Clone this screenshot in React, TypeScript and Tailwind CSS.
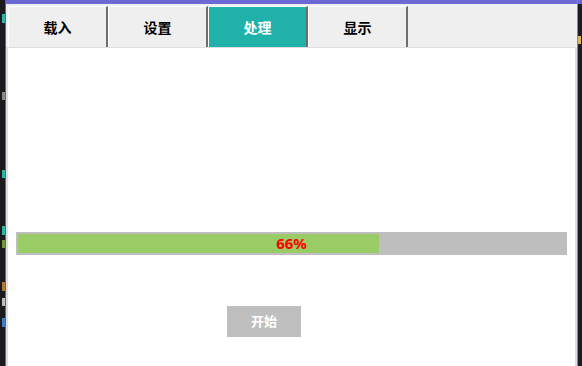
import React from 'react';

const TABS = ['载入', '设置', '处理', '显示'];
const ACTIVE = 2;
const PROGRESS = 66;

// slivers of the code editor peeking out on the left edge
const EDGE_BITS: { top: number; h: number; color: string }[] = [
  { top: 14, h: 9, color: '#2fb5a8' },
  { top: 92, h: 8, color: '#8a8a8a' },
  { top: 170, h: 8, color: '#2fb5a8' },
  { top: 226, h: 9, color: '#2fb5a8' },
  { top: 240, h: 8, color: '#6f9a34' },
  { top: 282, h: 9, color: '#b07a30' },
  { top: 298, h: 8, color: '#bdbdbd' },
  { top: 318, h: 9, color: '#3f7fc8' },
];

const App: React.FC = () => {
  return (
    <div
      className="w-[582px] h-[366px] flex bg-[#1b1b1f] overflow-hidden"
      style={{ fontFamily: '"Noto Sans", "Noto Sans CJK SC", sans-serif' }}
    >
      {/* left editor strip */}
      <div className="w-[5px] h-full flex flex-col items-end">
        {EDGE_BITS.map((b, i) => (
          <div
            key={i}
            className="w-[3px]"
            style={{
              marginTop: i === 0 ? b.top : b.top - EDGE_BITS[i - 1].top - EDGE_BITS[i - 1].h,
              height: b.h,
              backgroundColor: b.color,
            }}
          />
        ))}
      </div>
      <div className="w-[1px] h-full bg-[#5b5bc8]" />

      {/* window */}
      <div className="w-[571px] h-full flex flex-col">
        <div className="h-[4px] bg-[#6c68d4]" />
        <div className="h-[43px] bg-[#efefef] flex pl-[2px] pt-[2px]">
          {TABS.map((t, i) => (
            <div
              key={t}
              className={
                'w-[100px] h-[41px] flex items-center justify-center text-[14px] font-bold border-t border-l border-r-2 border-t-white border-l-white border-r-[#6e6e6e] ' +
                (i === ACTIVE ? 'bg-[#20b2aa] text-white' : 'bg-[#efefef] text-black')
              }
            >
              {t}
            </div>
          ))}
        </div>
        <div className="flex-1 flex flex-col bg-white border-t border-l-2 border-r-2 border-[#dedede]">
          <div className="h-[184px]" />
          <div className="mx-[8px] h-[23px] border-2 border-[#bebebe] bg-[#bebebe] flex relative">
            <div className="h-full bg-[#99cc66]" style={{ width: `${PROGRESS}%` }} />
            <div className="absolute inset-0 flex items-center justify-center text-[15px] font-bold text-[#ff0000]">
              {PROGRESS}%
            </div>
          </div>
          <div className="flex mt-[51px] pl-[219px]">
            <div className="w-[74px] h-[31px] bg-[#bfbfbf] flex items-center justify-center text-[13px] font-bold text-white">
              开始
            </div>
          </div>
        </div>
      </div>

      {/* right editor strip */}
      <div className="w-[1px] h-full bg-[#8a8a8a]" />
      <div className="flex-1 h-full bg-[#1c1c24] flex flex-col">
        <div className="h-[4px] bg-[#6c68d4]" />
        <div className="mt-[32px] h-[8px] w-[3px] bg-[#e0b060]" />
      </div>
    </div>
  );
};

export default App;
